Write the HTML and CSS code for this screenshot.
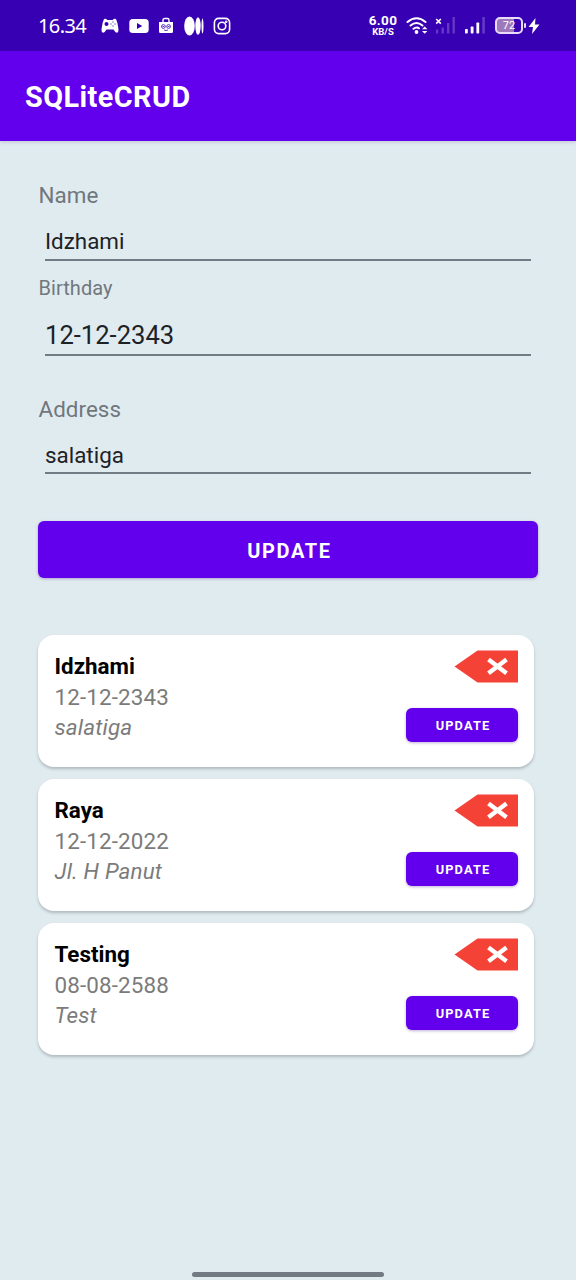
FILE: index.html
```html
<!DOCTYPE html>
<html lang="id">
<head>
<meta charset="utf-8">
<title>SQLiteCRUD</title>
<link rel="stylesheet" href="styles.css">
</head>
<body>
<header>
  <div class="status">
    <span class="clock">16.34</span>
    <div class="notifications">
      <svg width="18" height="18" viewBox="0 0 18 18"><path fill="#fff" d="M3 2Q5 1.300 6.300 3H11.700Q13 1.300 15 2Q16.500 5 17.300 11Q18 15 16 15.700Q14.500 16 12.500 12.500H5.500Q3.500 16 2 15.700Q0 15 .7 11Q1.500 5 3 2Z"/><circle cx="5.500" cy="7" r="2" fill="#3700b3"/><g fill="#3700b3" opacity=".7"><circle cx="12" cy="5" r=".7"/><circle cx="12" cy="9" r=".7"/><circle cx="10" cy="7" r=".7"/><circle cx="14" cy="7" r=".7"/></g></svg>
      <svg width="20" height="18" viewBox="0 0 20 18"><rect x=".3" y="2" width="19.400" height="14" rx="3.500" fill="#fff"/><path d="M8 6l5.300 3L8 12z" fill="#3700b3"/></svg>
      <svg width="16" height="18" viewBox="0 0 16 18"><path d="M1 5h14v9.500q0 1.500-1.500 1.500h-11Q1 16 1 14.500z" fill="#fff"/><path d="M5 5V3q0-1.500 1.500-1.500h3Q11 1.500 11 3v2" fill="none" stroke="#fff" stroke-width="1.400"/><g fill="none" stroke="#3700b3" stroke-width=".8"><circle cx="5.400" cy="9.500" r="1.900"/><circle cx="10.600" cy="9.500" r="1.900"/><path d="M4.500 9.500h1.800M9.700 9.500h1.800M6 13q2 1 4 0"/></g></svg>
      <svg width="20" height="20" viewBox="0 0 20 20"><g fill="#fff"><ellipse cx="5.500" cy="10" rx="5.300" ry="9.500"/><ellipse cx="14" cy="10" rx="2.700" ry="8.800"/><ellipse cx="18.500" cy="10" rx="1" ry="7.500"/></g></svg>
      <svg width="18" height="18" viewBox="0 0 18 18" fill="none" stroke="#fff" stroke-width="1.600"><rect x="1.400" y="1.400" width="15.200" height="15.200" rx="4.300"/><circle cx="9" cy="9" r="3.800"/><circle cx="13.200" cy="4.800" r=".5"/></svg>
    </div>
    <div class="system">
      <div class="speed"><b>6.00</b><span>KB/S</span></div>
      <svg class="wifi" width="22" height="20" viewBox="0 0 22 20"><g fill="none" stroke="#fff" stroke-width="2" stroke-linecap="round"><path d="M1.500 6Q10.500-1.500 19.500 6"/><path d="M4.500 9.500Q10.500 4.500 16.500 9.500"/><path d="M7.500 12.800Q10.500 10.500 13 12.300"/></g><circle cx="10.500" cy="16" r="1.900" fill="#fff"/><path d="M16 13.200l2.700-2.700 2.700 2.700zM16 15l2.700 2.700 2.700-2.700z" fill="#fff"/></svg>
      <svg class="no-signal" width="21" height="18" viewBox="0 0 21 18"><g fill="#6339c6"><rect x="1" y="12.500" width="2.200" height="4"/><rect x="6.500" y="10.500" width="2.400" height="6"/><rect x="12" y="6" width="2.400" height="10.500"/><rect x="17.500" y="0" width="2.400" height="16.500"/></g><path d="M1.200 2l4.600 4.600M5.800 2L1.200 6.600" stroke="#fff" stroke-width="1.600"/></svg>
      <svg class="signal" width="21" height="18" viewBox="0 0 21 18"><g fill="#fff"><rect x="0" y="12" width="2.800" height="4.500" rx=".7"/><rect x="5.700" y="9.500" width="2.800" height="7" rx=".7"/><rect x="11.400" y="5.500" width="2.800" height="11" rx=".7"/></g><rect x="17.300" y="0" width="2.600" height="16.500" fill="#6339c6"/></svg>
      <div class="battery"><span>72</span></div>
      <svg class="bolt" width="12" height="18" viewBox="0 0 12 18"><path d="M7.500 1L.5 10h4.500L4 17l7.500-9.500H7z" fill="#fff"/></svg>
    </div>
  </div>
  <h1>SQLiteCRUD</h1>
</header>
<main>
  <form>
    <label>Name</label>
    <div class="field name">Idzhami</div>
    <label class="small">Birthday</label>
    <div class="field date">12-12-2343</div>
    <label class="address-label">Address</label>
    <div class="field address">salatiga</div>
    <button type="button" class="submit">UPDATE</button>
  </form>
  <section class="list">
    <article>
      <div class="info"><h2>Idzhami</h2><p>12-12-2343</p><p class="place">salatiga</p></div>
      <div class="actions"><svg width="64" height="33" viewBox="0 0 64 33"><path d="M.5 16.500L23.500 .5H64v32H23.500z" fill="#f44336"/><path d="M34.500 9.500l18 13.800M52.500 9.500L34.500 23.300" stroke="#fff" stroke-width="4.400"/></svg><button type="button">UPDATE</button></div>
    </article>
    <article>
      <div class="info"><h2>Raya</h2><p>12-12-2022</p><p class="place">Jl. H Panut</p></div>
      <div class="actions"><svg width="64" height="33" viewBox="0 0 64 33"><path d="M.5 16.500L23.500 .5H64v32H23.500z" fill="#f44336"/><path d="M34.500 9.500l18 13.800M52.500 9.500L34.500 23.300" stroke="#fff" stroke-width="4.400"/></svg><button type="button">UPDATE</button></div>
    </article>
    <article>
      <div class="info"><h2>Testing</h2><p>08-08-2588</p><p class="place">Test</p></div>
      <div class="actions"><svg width="64" height="33" viewBox="0 0 64 33"><path d="M.5 16.500L23.500 .5H64v32H23.500z" fill="#f44336"/><path d="M34.500 9.500l18 13.800M52.500 9.500L34.500 23.300" stroke="#fff" stroke-width="4.400"/></svg><button type="button">UPDATE</button></div>
    </article>
  </section>
</main>
<footer><div class="handle"></div></footer>
</body>
</html>
```
FILE: styles.css
```css
* { box-sizing: border-box; }
body {
  margin: 0;
  width: 576px;
  height: 1280px;
  display: flex;
  flex-direction: column;
  overflow: hidden;
  background: #e0ebf0;
  font-family: Roboto, "Noto Sans", sans-serif;
}
svg { display: block; flex: none; }
h1, h2, p { margin: 0; }
header { height: 141px; background: #6200ee; box-shadow: 0 1px 4px rgba(70, 30, 120, .2); }
.status {
  height: 51px;
  padding: 0 36px 0 38px;
  display: flex;
  align-items: center;
  background: #3700b3;
  color: #fff;
}
.clock { width: 63px; font: 20px/24px "Noto Sans", sans-serif; letter-spacing: -.6px; }
.notifications { display: flex; align-items: center; gap: 9.500px; }
.system { margin-left: auto; display: flex; align-items: center; }
.speed { width: 28px; display: flex; flex-direction: column; align-items: center; }
.speed b { font: 700 13.500px/13px Roboto, sans-serif; letter-spacing: .3px; }
.speed span { font: 700 9.500px/10px Roboto, sans-serif; }
.wifi { margin-left: 9px; }
.no-signal { margin-left: 7px; }
.signal { margin-left: 9px; }
.battery {
  width: 28px;
  height: 17px;
  margin-left: 9px;
  border: 2px solid #e8dcfa;
  border-radius: 5px;
  background: linear-gradient(90deg, #9d79bc 72%, #3700b3 72%);
  font-size: 11px;
  line-height: 13px;
  text-align: center;
  position: relative;
}
.battery::after { content: ""; position: absolute; right: -5px; top: 4px; width: 2px; height: 5px; background: #e8dcfa; border-radius: 1px; }
.bolt { margin-left: 5px; }
h1 { padding: 29px 25px 0; color: #fff; font-size: 28.800px; line-height: 34px; font-weight: 700; letter-spacing: .45px; }
main { padding: 41px 38px 0; flex: 1; }
form { display: flex; flex-direction: column; }
label { height: 26px; padding-left: .5px; color: #70777d; font-size: 22.400px; line-height: 26px; letter-spacing: .05px; }
.small { height: 24px; margin-top: 15px; font-size: 20px; line-height: 24px; }
.address-label { margin-top: 40px; }
.field {
  margin: 0 7px 0 6.500px;
  height: 53px;
  padding: 20px 0 0 .5px;
  border-bottom: 2px solid #717b83;
  color: #1d2226;
  font-size: 22.400px;
  line-height: 26px;
}
.date { height: 56px; font-size: 25.600px; line-height: 30px; }
.address { height: 52px; }
button {
  border: 0;
  padding: 0;
  background: #6200ee;
  color: #fff;
  font-family: inherit;
  font-weight: 700;
  box-shadow: 0 1px 3px rgba(80, 30, 140, .35);
}
.submit { width: 500px; height: 57px; margin-top: 47px; padding: 2px 0 0 3px; border-radius: 6px; font-size: 20px; letter-spacing: 1.600px; }
.list { width: 496px; margin-top: 57px; display: flex; flex-direction: column; gap: 12px; }
article {
  height: 132px;
  padding: 15px 16px;
  display: flex;
  justify-content: space-between;
  background: #fff;
  border-radius: 16px;
  box-shadow: 0 2px 3px rgba(50, 60, 65, .28);
}
.info { padding: 1px 0 0 .5px; color: #7b7b7b; font-size: 22.400px; line-height: 30.500px; letter-spacing: .15px; }
.info h2 { color: #000; font-size: 22.400px; font-weight: 700; letter-spacing: 0; }
.place { font-style: italic; }
.actions { display: flex; flex-direction: column; align-items: flex-end; gap: 25px; }
.actions button { width: 112px; height: 34px; padding-left: 2px; border-radius: 6px; font-size: 12.800px; letter-spacing: 1.150px; }
footer { display: flex; justify-content: center; height: 8px; }
.handle { width: 192px; height: 5px; border-radius: 3px; background: #737b82; }
```
